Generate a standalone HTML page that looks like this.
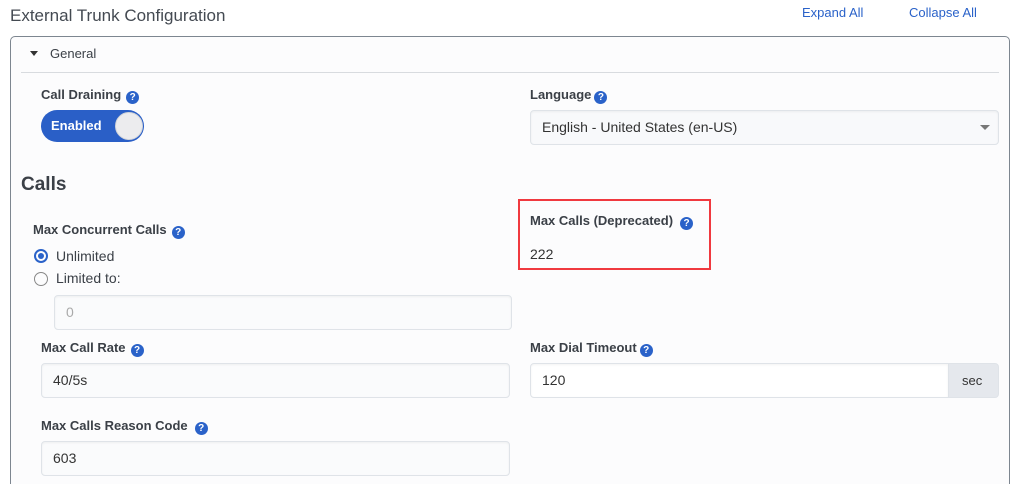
<!DOCTYPE html>
<html><head><style>
*{box-sizing:border-box;margin:0;padding:0}
html,body{width:1019px;height:484px;overflow:hidden}
body{background:#fff;font-family:"Liberation Sans",Arial,sans-serif;color:#3b4047;position:relative}
.a{position:absolute;white-space:nowrap}
.lbl{font-weight:bold;font-size:13px;color:#3b4047}
.q{display:inline-block;width:13px;height:13px;border-radius:50%;background:#2a62c9;color:#fff;font-size:10px;font-weight:bold;text-align:center;line-height:13px;vertical-align:-1px;margin-left:5px}
.inp{position:absolute;height:35px;border:1px solid #dfe3e8;border-radius:4px;background:#fafbfc;font-size:14px;padding:0 11px;line-height:33px;color:#333;box-shadow:inset 0 1px 2px rgba(0,0,0,.05)}
.link{color:#2a62c9;font-size:13px}
</style></head><body>
<div class="a" style="left:10px;top:6px;font-size:17px;color:#444a52">External Trunk Configuration</div>
<div class="a link" style="left:802px;top:5px">Expand All</div>
<div class="a link" style="left:909px;top:5px">Collapse All</div>
<div class="a" style="left:10px;top:36px;width:1000px;height:470px;border:1px solid #7d8690;border-radius:5px;background:#fcfcfd"></div>
<div class="a" style="left:30px;top:51px;width:0;height:0;border-left:4px solid transparent;border-right:4px solid transparent;border-top:5px solid #333"></div>
<div class="a" style="left:50px;top:46px;font-size:13px;color:#3b4047">General</div>
<div class="a" style="left:21px;top:72px;width:978px;height:1px;background:#d8dbdf"></div>

<div class="a lbl" style="left:41px;top:87px">Call Draining<span class="q">?</span></div>
<div class="a" style="left:41px;top:110px;width:103px;height:32px;border-radius:16px;background:#2a5fc7"></div>
<div class="a" style="left:51px;top:118px;font-size:13px;font-weight:bold;color:#fff">Enabled</div>
<div class="a" style="left:115px;top:112px;width:28px;height:28px;border-radius:50%;background:#ececee;border:1px solid #d0d3d8"></div>

<div class="a lbl" style="left:530px;top:87px">Language<span class="q" style="margin-left:3px">?</span></div>
<div class="inp" style="left:530px;top:110px;width:469px;background:#f8f9fb">English - United States (en-US)</div>
<div class="a" style="left:980px;top:125px;width:0;height:0;border-left:5px solid transparent;border-right:5px solid transparent;border-top:5px solid #777"></div>

<div class="a" style="left:21px;top:174px;font-size:19px;font-weight:bold;color:#3b4047">Calls</div>

<div class="a" style="left:518px;top:199px;width:193px;height:71px;border:2px solid #f0393f"></div>
<div class="a lbl" style="left:530px;top:213px">Max Calls (Deprecated)<span class="q" style="margin-left:7px">?</span></div>
<div class="a" style="left:530px;top:246px;font-size:14px;color:#333">222</div>

<div class="a lbl" style="left:33px;top:222px">Max Concurrent Calls<span class="q">?</span></div>
<div class="a" style="left:34px;top:249px;width:14px;height:14px;border-radius:50%;border:2px solid #2a62c9"></div>
<div class="a" style="left:38px;top:253px;width:6px;height:6px;border-radius:50%;background:#2a62c9"></div>
<div class="a" style="left:56px;top:248px;font-size:14px">Unlimited</div>
<div class="a" style="left:34px;top:272px;width:14px;height:14px;border-radius:50%;border:1.5px solid #888"></div>
<div class="a" style="left:56px;top:270px;font-size:14px">Limited to:</div>
<div class="inp" style="left:54px;top:295px;width:458px;color:#aaa">0</div>

<div class="a lbl" style="left:41px;top:340px">Max Call Rate<span class="q">?</span></div>
<div class="inp" style="left:41px;top:363px;width:469px">40/5s</div>
<div class="a lbl" style="left:530px;top:340px">Max Dial Timeout<span class="q" style="margin-left:3px">?</span></div>
<div class="inp" style="left:530px;top:363px;width:419px;border-radius:4px 0 0 4px;background:#fff">120</div>
<div class="inp" style="left:948px;top:363px;width:51px;border-radius:0 4px 4px 0;background:#e5e8ed;font-size:13px;padding:0 0 0 13px;box-shadow:none">sec</div>

<div class="a lbl" style="left:41px;top:418px">Max Calls Reason Code<span class="q" style="margin-left:7px">?</span></div>
<div class="inp" style="left:41px;top:441px;width:469px">603</div>
</body></html>
